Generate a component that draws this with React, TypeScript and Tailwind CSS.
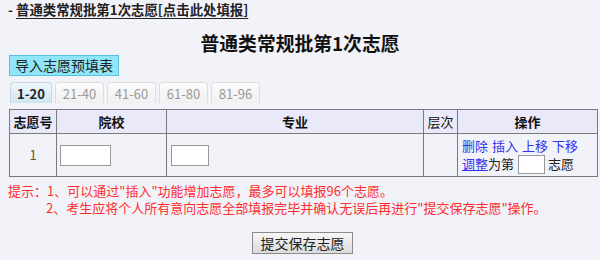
export default function App() {
  const tabs = ["21-40", "41-60", "61-80", "81-96"];
  return (
    <div className="w-[600px] h-[260px] overflow-hidden bg-[#f2f3f9] text-[#222] font-['Noto_Sans_CJK_SC',sans-serif]">
      <div className="h-[18px] pt-[1px] pl-[8px] text-[13.4px] leading-[17px] font-bold text-[#222]">
        - <span className="underline underline-offset-[3px]">普通类常规批第1次志愿[点击此处填报]</span>
      </div>
      <div className="mt-[14px] h-[22px] text-center text-[18.8px] leading-[22px] font-bold text-[#111]">
        普通类常规批第1次志愿
      </div>
      <div className="mt-[1px] h-[21px] pl-[9px] flex">
        <button className="w-[110px] h-[21px] bg-[#90e6f8] border border-[#58c3dc] text-[14px] leading-[19px] text-[#222]">
          导入志愿预填表
        </button>
      </div>
      <div className="mt-[6px] h-[21px] pl-[10px] flex gap-[3px]">
        <div className="w-[42px] h-[21px] rounded-t-[4px] border border-b-0 border-[#c9d6de] bg-gradient-to-b from-[#eef6fa] to-[#cfe5f0] text-[13px] leading-[21px] font-bold text-[#222] text-center">
          1-20
        </div>
        {tabs.map((t) => (
          <div
            key={t}
            className="w-[49px] h-[21px] rounded-t-[4px] border border-b-0 border-[#dcdcdc] bg-gradient-to-b from-[#fbfbfb] to-[#f0f0f0] text-[13px] leading-[21px] text-[#9a9a9a] text-center"
          >
            {t}
          </div>
        ))}
      </div>
      <div className="mt-[6px] pl-[9px]">
        <table className="w-[588px] border-collapse text-[13px] table-fixed">
          <colgroup>
            <col className="w-[47px]" />
            <col className="w-[110px]" />
            <col className="w-[257px]" />
            <col className="w-[34px]" />
            <col className="w-[140px]" />
          </colgroup>
          <thead>
            <tr className="h-[24px] bg-[#e9e9f9]">
              <th className="border border-[#7a7a7a] font-bold text-[#111] p-0 leading-[22px]">志愿号</th>
              <th className="border border-[#7a7a7a] font-bold text-[#111] p-0 leading-[22px]">院校</th>
              <th className="border border-[#7a7a7a] font-bold text-[#111] p-0 leading-[22px]">专业</th>
              <th className="border border-[#7a7a7a] font-normal text-[#111] p-0 leading-[22px]">层次</th>
              <th className="border border-[#7a7a7a] font-bold text-[#111] p-0 leading-[22px]">操作</th>
            </tr>
          </thead>
          <tbody>
            <tr className="h-[43px]">
              <td className="border border-[#7a7a7a] text-center text-[#6b5a1e] p-0">1</td>
              <td className="border border-[#7a7a7a] p-0 pl-[3px]">
                <input className="block w-[51px] h-[21px] bg-white border border-[#999]" />
              </td>
              <td className="border border-[#7a7a7a] p-0 pl-[4px]">
                <input className="block w-[38px] h-[21px] bg-white border border-[#999]" />
              </td>
              <td className="border border-[#7a7a7a] p-0"></td>
              <td className="border border-[#7a7a7a] p-0 pl-[4px] leading-[18px]">
                <div className="text-[#3333ee] flex gap-[4px]">
                  <span>删除</span>
                  <span>插入</span>
                  <span>上移</span>
                  <span>下移</span>
                </div>
                <div className="flex items-center text-[#222]">
                  <span className="text-[#3333ee] underline">调整</span>
                  <span>为第</span>
                  <input className="block ml-[4px] mr-[3px] w-[27px] h-[19px] bg-white border border-[#999]" />
                  <span>志愿</span>
                </div>
              </td>
            </tr>
          </tbody>
        </table>
      </div>
      <div className="mt-[5px] pl-[8px] text-[13px] leading-[17px] text-[#ff2d2d]">
        <div className="h-[17px]">提示：1、可以通过"插入"功能增加志愿，最多可以填报96个志愿。</div>
        <div className="h-[17px] pl-[38px]">2、考生应将个人所有意向志愿全部填报完毕并确认无误后再进行"提交保存志愿"操作。</div>
      </div>
      <div className="mt-[16px] flex justify-center pl-[5px]">
        <button className="w-[101px] h-[22px] border border-[#8a8a8a] bg-gradient-to-b from-[#f6f6f6] to-[#dcdcdc] text-[14px] leading-[20px] text-[#222]">
          提交保存志愿
        </button>
      </div>
    </div>
  );
}
